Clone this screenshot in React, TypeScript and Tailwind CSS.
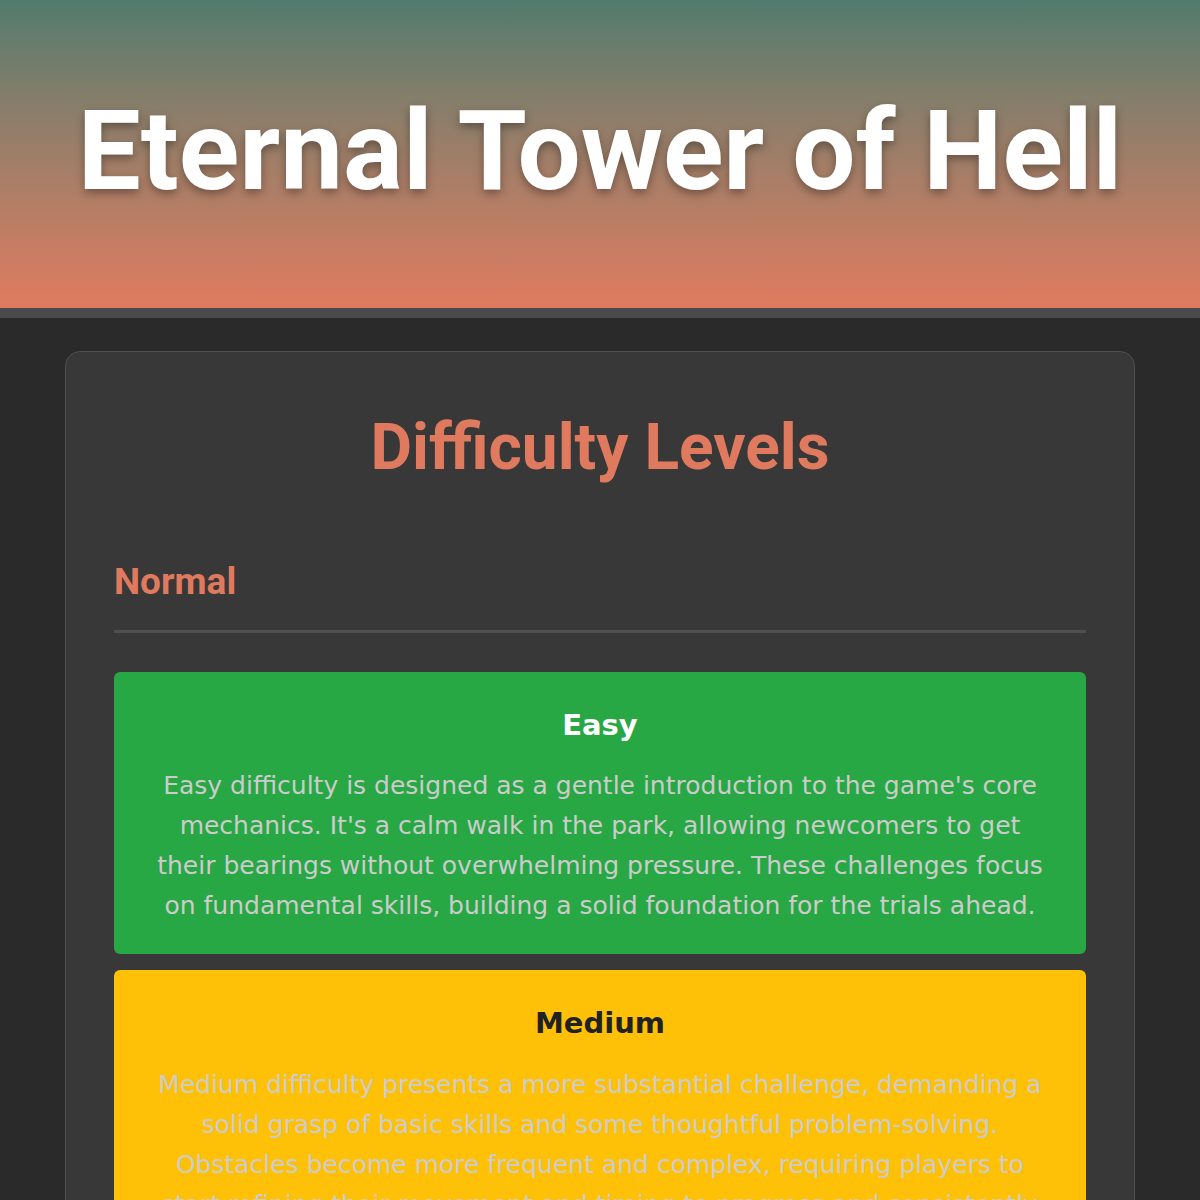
import React from 'react';

type Level = {
  name: string;
  bg: string;
  title: string;
  text: string;
};

const levels: Level[] = [
  {
    name: 'Easy',
    bg: 'bg-[#28a745]',
    title: 'text-white',
    text:
      "Easy difficulty is designed as a gentle introduction to the game's core mechanics. It's a calm walk in the park, allowing newcomers to get their bearings without overwhelming pressure. These challenges focus on fundamental skills, building a solid foundation for the trials ahead.",
  },
  {
    name: 'Medium',
    bg: 'bg-[#ffc107]',
    title: 'text-[#212121]',
    text:
      'Medium difficulty presents a more substantial challenge, demanding a solid grasp of basic skills and some thoughtful problem-solving. Obstacles become more frequent and complex, requiring players to start refining their movement and timing to progress and consistently overcome each stage.',
  },
  {
    name: 'Hard',
    bg: 'bg-[#fd7e14]',
    title: 'text-white',
    text:
      'Hard difficulty tests precision and patience. Jumps are tighter, gaps are wider and every mistake sends you further down the tower.',
  },
];

function LevelCard({ level }: { level: Level }) {
  return (
    <div
      className={`${level.bg} rounded-[6px] px-[36px] pt-[36px] pb-[28px] text-center font-['DejaVu_Sans',_sans-serif]`}
    >
      <h4 className={`${level.title} text-[29px] font-bold leading-[1.2] mb-[24px]`}>{level.name}</h4>
      <p className="text-[#cccccc] text-[25px] leading-[40px]">{level.text}</p>
    </div>
  );
}

export default function App() {
  return (
    <div className="min-h-screen bg-[#2a2a2a] font-['Roboto',_'Liberation_Sans',_sans-serif] pb-16">
      <header className="bg-gradient-to-b from-[#507b6e] to-[#e07a5f] border-b-[10px] border-[#4a4a4a] pt-[84px] pb-[90px] text-center">
        <h1 className="text-white text-[112px] font-bold leading-[1.2] [text-shadow:0_4px_10px_rgba(0,0,0,0.35)]">
          Eternal Tower of Hell
        </h1>
      </header>

      <main className="max-w-[1070px] mx-auto mt-[33px] bg-[#383838] border border-[#505050] rounded-[15px] px-[48px] pt-[58px] pb-12">
        <h2 className="text-[#e07a5f] text-[64px] font-bold leading-[1.2] text-center">Difficulty Levels</h2>

        <section className="mt-[73px]">
          <h3 className="text-[#e07a5f] text-[37px] font-bold leading-[1.2] pb-[25px] border-b-[3px] border-[#4f4f4f]">
            Normal
          </h3>
          <div className="mt-[39px] flex flex-col gap-[16px]">
            {levels.map((l) => (
              <LevelCard key={l.name} level={l} />
            ))}
          </div>
        </section>
      </main>
    </div>
  );
}
